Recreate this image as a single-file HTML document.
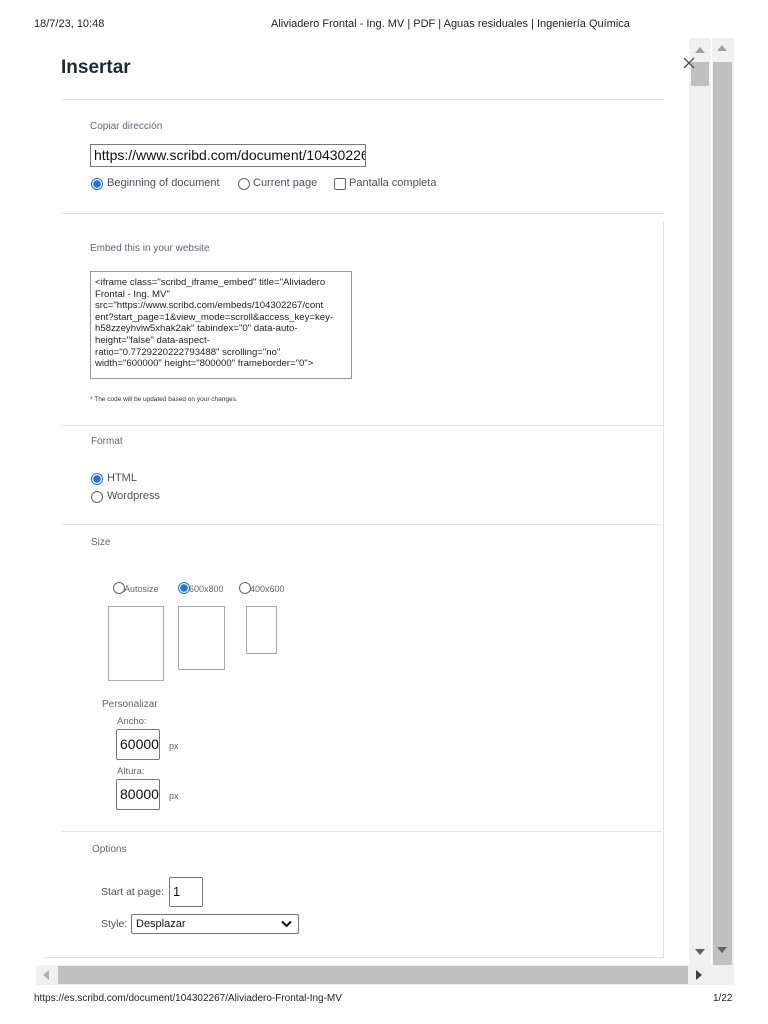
<!DOCTYPE html>
<html><head><meta charset="utf-8"><style>
*{margin:0;padding:0;box-sizing:border-box}
body{width:768px;height:1024px;position:relative;background:#fff;font-family:"Liberation Sans",sans-serif;overflow:hidden}
.a{position:absolute;white-space:nowrap}
.lbl{color:#5f6577;font-size:10px}
.t{color:#4a5064;font-size:11px}
.hr{position:absolute;height:1px;background:#e3e3e6}
.rad{position:absolute;width:12px;height:12px;border-radius:50%;border:1px solid #666;background:#fff}
.rad.on{border:1.5px solid #1a73e8;background:radial-gradient(circle,#1a73e8 0 3.5px,#fff 4px)}
.box{position:absolute;border:1px solid #a8a8a8}
</style></head><body>
<div class="a" style="left:34px;top:18px;font-size:11px;color:#222">18/7/23, 10:48</div>
<div class="a" style="left:271px;top:18px;font-size:11px;color:#222">Aliviadero Frontal - Ing. MV | PDF | Aguas residuales | Ingeniería Química</div>

<div class="a" style="left:61px;top:57px;font-size:19px;font-weight:bold;color:#1e2a3b">Insertar</div>
<div class="hr" style="left:62px;top:99px;width:602px"></div>

<div class="a lbl" style="left:90px;top:121px">Copiar dirección</div>
<div class="a" style="left:90px;top:144px;width:276px;height:23px;border:1px solid #777;font-size:14px;color:#111;padding:2px 3px;overflow:hidden">https://www.scribd.com/document/104302267</div>
<div class="rad on" style="left:91px;top:178px"></div>
<div class="a t" style="left:107px;top:177px">Beginning of document</div>
<div class="rad" style="left:238px;top:178px"></div>
<div class="a t" style="left:253px;top:177px">Current page</div>
<div class="a" style="left:334px;top:178px;width:12px;height:12px;border:1px solid #666;border-radius:2px"></div>
<div class="a t" style="left:349px;top:177px">Pantalla completa</div>
<div class="hr" style="left:62px;top:213px;width:602px"></div>
<div class="a" style="left:663px;top:222px;width:1px;height:735px;background:#e3e3e6"></div>

<div class="a lbl" style="left:90px;top:243px">Embed this in your website</div>
<div class="a" style="left:90px;top:271px;width:262px;height:108px;border:1px solid #999;font-size:9.6px;line-height:11.6px;color:#222;padding:5px 4px;overflow:hidden">&lt;iframe class="scribd_iframe_embed" title="Aliviadero<br>Frontal - Ing. MV"<br>src="https://www.scribd.com/embeds/104302267/cont<br>ent?start_page=1&amp;view_mode=scroll&amp;access_key=key-<br>h58zzeyhviw5xhak2ak" tabindex="0" data-auto-<br>height="false" data-aspect-<br>ratio="0.7729220222793488" scrolling="no"<br>width="600000" height="800000" frameborder="0"&gt;</div>
<div class="a" style="left:90px;top:396px;font-size:6.5px;color:#333">* The code will be updated based on your changes.</div>
<div class="hr" style="left:62px;top:425px;width:602px"></div>

<div class="a lbl" style="left:91px;top:436px">Format</div>
<div class="rad on" style="left:91px;top:473px"></div>
<div class="a t" style="left:107px;top:472px">HTML</div>
<div class="rad" style="left:91px;top:491px"></div>
<div class="a t" style="left:107px;top:490px">Wordpress</div>
<div class="hr" style="left:62px;top:524px;width:600px"></div>

<div class="a lbl" style="left:91px;top:537px">Size</div>
<div class="rad" style="left:113px;top:582px"></div>
<div class="a" style="left:124px;top:584px;font-size:9px;color:#5f6577">Autosize</div>
<div class="rad on" style="left:178px;top:582px"></div>
<div class="a" style="left:189px;top:584px;font-size:9px;color:#5f6577">600x800</div>
<div class="rad" style="left:239px;top:582px"></div>
<div class="a" style="left:250px;top:584px;font-size:9px;color:#5f6577">400x600</div>
<div class="box" style="left:108px;top:606px;width:56px;height:75px"></div>
<div class="box" style="left:178px;top:606px;width:47px;height:64px"></div>
<div class="box" style="left:246px;top:606px;width:31px;height:48px"></div>

<div class="a lbl" style="left:102px;top:699px">Personalizar</div>
<div class="a" style="left:117px;top:716px;font-size:9.5px;color:#5f6577">Ancho:</div>
<div class="a" style="left:116px;top:729px;width:44px;height:31px;border:1px solid #777;border-radius:2px;font-size:14px;color:#111;padding:6px 3px">60000</div>
<div class="a" style="left:169px;top:741px;font-size:9px;color:#5f6577">px</div>
<div class="a" style="left:117px;top:766px;font-size:9.5px;color:#5f6577">Altura:</div>
<div class="a" style="left:116px;top:779px;width:44px;height:31px;border:1px solid #777;border-radius:2px;font-size:14px;color:#111;padding:6px 3px">80000</div>
<div class="a" style="left:169px;top:791px;font-size:9px;color:#5f6577">px</div>
<div class="hr" style="left:62px;top:831px;width:600px"></div>

<div class="a lbl" style="left:92px;top:844px">Options</div>
<div class="a" style="left:101px;top:886px;font-size:10.5px;color:#4a5064">Start at page:</div>
<div class="a" style="left:169px;top:877px;width:34px;height:30px;border:1px solid #777;border-radius:2px;font-size:13px;color:#111;padding:6px 3px">1</div>
<div class="a" style="left:101px;top:918px;font-size:10.5px;color:#4a5064">Style:</div>
<div class="a" style="left:131px;top:914px;width:168px;height:20px;border:1px solid #777;border-radius:2px;font-size:11px;color:#111;padding:3px 4px">Desplazar
<svg style="position:absolute;right:6px;top:5px" width="11" height="8" viewBox="0 0 11 8"><path d="M1 1.5l4.5 4.5 4.5-4.5" stroke="#111" stroke-width="2" fill="none"/></svg></div>
<div class="hr" style="left:44px;top:957px;width:620px"></div>

<div class="a" style="left:689px;top:38px;width:22px;height:927px;background:#f0f0f0"></div>
<div class="a" style="left:691px;top:62px;width:18px;height:24px;background:#c0c0c0"></div>
<div class="a" style="left:712px;top:38px;width:22px;height:927px;background:#f0f0f0"></div>
<div class="a" style="left:713px;top:62px;width:19px;height:903px;background:#c0c0c0"></div>
<svg class="a" style="left:694px;top:46px" width="12" height="8"><path d="M1 7L6 1 11 7z" fill="#a0a0a0"/></svg>
<svg class="a" style="left:716px;top:44px" width="12" height="8"><path d="M1 7L6 1 11 7z" fill="#a0a0a0"/></svg>
<svg class="a" style="left:694px;top:948px" width="12" height="8"><path d="M1 1L6 7 11 1z" fill="#606060"/></svg>
<svg class="a" style="left:716px;top:946px" width="12" height="8"><path d="M1 1L6 7 11 1z" fill="#606060"/></svg>
<div class="a" style="left:36px;top:965px;width:698px;height:20px;background:#f0f0f0"></div>
<div class="a" style="left:58px;top:966px;width:630px;height:18px;background:#c0c0c0"></div>
<svg class="a" style="left:42px;top:969px" width="8" height="12"><path d="M7 1L1 6 7 11z" fill="#b0b0b0"/></svg>
<svg class="a" style="left:695px;top:969px" width="8" height="12"><path d="M1 1L7 6 1 11z" fill="#404040"/></svg>

<svg class="a" style="left:683px;top:57px;z-index:5" width="12" height="12"><path d="M1 1L11 11M11 1L1 11" stroke="#4a5064" stroke-width="1.3"/></svg>

<div class="a" style="left:34px;top:993px;font-size:10px;color:#222">https://es.scribd.com/document/104302267/Aliviadero-Frontal-Ing-MV</div>
<div class="a" style="left:713px;top:993px;font-size:10px;color:#222">1/22</div>
</body></html>
